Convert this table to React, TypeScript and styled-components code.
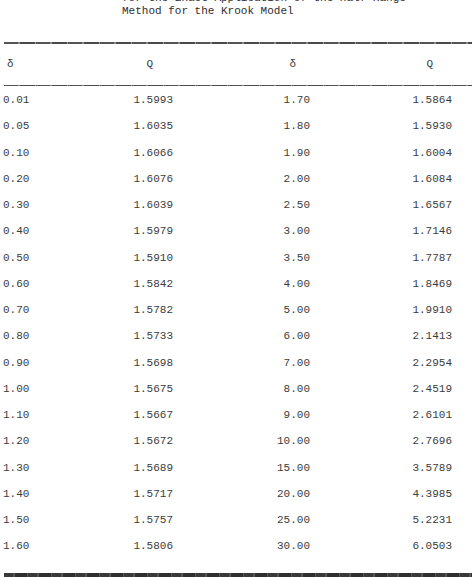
import React from 'react'
import styled, { createGlobalStyle } from 'styled-components'

const GlobalStyle = createGlobalStyle`
  html, body {
    margin: 0;
    padding: 0;
    background: #ffffff;
  }
  body {
    font-family: "Liberation Mono", "DejaVu Sans Mono", monospace;
    font-size: 11px;
    color: #3c3c3c;
    overflow: hidden;
  }
`

const Page = styled.div`
  width: 474px;
  height: 577px;
  overflow: hidden;
  box-sizing: border-box;
`

const Caption = styled.div`
  margin-top: -8px;
  padding-left: 122px;
  line-height: 13px;
  white-space: pre;
  color: #2e2e2e;
`

const Rule = styled.div<{ $thick?: boolean; $top?: number }>`
  margin: ${(p) => p.$top ?? 0}px 2px 0 4px;
  height: ${(p) => (p.$thick ? 6 : 1.5)}px;
  background: ${(p) =>
    p.$thick
      ? 'repeating-linear-gradient(90deg, #3a3a3a 0 9px, #555 9px 11px, #2f2f2f 11px 23px, #5c5c5c 23px 24px)'
      : 'repeating-linear-gradient(90deg, #555 0 14px, #8a8a8a 14px 16px, #4a4a4a 16px 31px, #999 31px 32px)'};
`

const Grid = styled.div<{ $rowHeight: number }>`
  display: grid;
  grid-template-columns: 100px 70px 137px 142px;
  grid-auto-rows: ${(p) => p.$rowHeight}px;
  padding-left: 3px;
  align-items: center;
`

const Cell = styled.div<{ $align: 'left' | 'right'; $pad?: number }>`
  text-align: ${(p) => p.$align};
  padding-left: ${(p) => (p.$align === 'left' ? p.$pad ?? 0 : 0)}px;
  padding-right: ${(p) => (p.$align === 'right' ? p.$pad ?? 0 : 0)}px;
  line-height: 13px;
  white-space: pre;
`

const rows: [string, string, string, string][] = [
  ['0.01', '1.5993', '1.70', '1.5864'],
  ['0.05', '1.6035', '1.80', '1.5930'],
  ['0.10', '1.6066', '1.90', '1.6004'],
  ['0.20', '1.6076', '2.00', '1.6084'],
  ['0.30', '1.6039', '2.50', '1.6567'],
  ['0.40', '1.5979', '3.00', '1.7146'],
  ['0.50', '1.5910', '3.50', '1.7787'],
  ['0.60', '1.5842', '4.00', '1.8469'],
  ['0.70', '1.5782', '5.00', '1.9910'],
  ['0.80', '1.5733', '6.00', '2.1413'],
  ['0.90', '1.5698', '7.00', '2.2954'],
  ['1.00', '1.5675', '8.00', '2.4519'],
  ['1.10', '1.5667', '9.00', '2.6101'],
  ['1.20', '1.5672', '10.00', '2.7696'],
  ['1.30', '1.5689', '15.00', '3.5789'],
  ['1.40', '1.5717', '20.00', '4.3985'],
  ['1.50', '1.5757', '25.00', '5.2231'],
  ['1.60', '1.5806', '30.00', '6.0503'],
]

export default function App() {
  return (
    <Page>
      <GlobalStyle />
      <Caption>
        {'for the Exact Application of the Half-Range\nMethod for the Krook Model'}
      </Caption>
      <Rule $top={24} />
      <Grid $rowHeight={41}>
        <Cell $align="left" $pad={4}>δ</Cell>
        <Cell $align="right" $pad={20}>Q</Cell>
        <Cell $align="right" $pad={14}>δ</Cell>
        <Cell $align="right" $pad={19}>Q</Cell>
      </Grid>
      <Rule />
      <Grid $rowHeight={26.25} style={{ marginTop: 1.5 }}>
        {rows.map((r) => (
          <React.Fragment key={r[0]}>
            <Cell $align="left">{r[0]}</Cell>
            <Cell $align="right">{r[1]}</Cell>
            <Cell $align="right">{r[2]}</Cell>
            <Cell $align="right">{r[3]}</Cell>
          </React.Fragment>
        ))}
      </Grid>
      <Rule $thick $top={13} />
    </Page>
  )
}
